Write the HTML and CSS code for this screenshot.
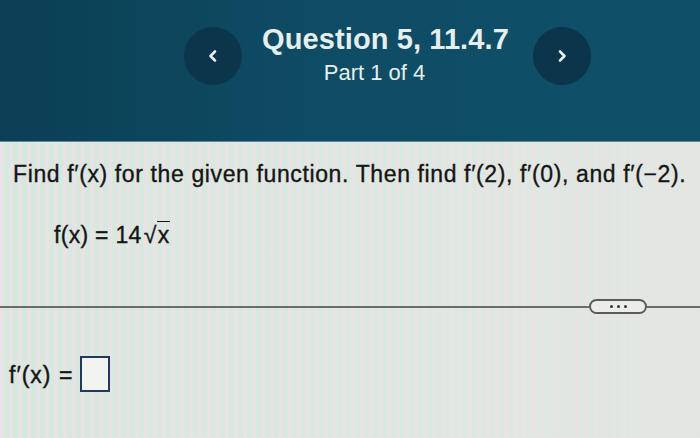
FILE: index.html
```html
<!DOCTYPE html>
<html>
<head>
<meta charset="utf-8">
<link rel="stylesheet" href="styles.css">
</head>
<body>
<header class="hdr">
  <button class="nav"><svg width="14" height="16" viewBox="0 0 14 16"><path d="M9 3.5 L4.5 8 L9 12.5" fill="none" stroke="#e8eef0" stroke-width="2.6" stroke-linecap="round" stroke-linejoin="round"/></svg></button>
  <div class="titles">
    <div class="title">Question 5, 11.4.7</div>
    <div class="part">Part 1 of 4</div>
  </div>
  <button class="nav"><svg width="14" height="16" viewBox="0 0 14 16"><path d="M5 3.5 L9.5 8 L5 12.5" fill="none" stroke="#e8eef0" stroke-width="2.6" stroke-linecap="round" stroke-linejoin="round"/></svg></button>
</header>
<main class="content">
  <p class="question">Find f′(x) for the given function. Then find f′(2), f′(0), and f′(−2).</p>
  <p class="func">f(x) = 14<span class="root">√</span><span class="radicand">x</span></p>
  <div class="divider">
    <div class="line"></div>
    <div class="pill"><span></span><span></span><span></span></div>
    <div class="line short"></div>
  </div>
  <div class="answer">
    <span class="lbl">f′(x) =</span>
    <span class="box"></span>
  </div>
</main>
</body>
</html>
```
FILE: styles.css
```css
html, body {
  margin: 0;
  padding: 0;
  width: 700px;
  height: 438px;
  overflow: hidden;
  font-family: "Liberation Sans", Arial, sans-serif;
}
body {
  background:
    linear-gradient(90deg, rgba(228,231,228,0) 0%, rgba(228,231,228,0.35) 55%, rgba(228,230,227,0.85) 100%),
    repeating-linear-gradient(90deg, #e9e2e6 0px, #e9e2e6 4px, #d6e9dd 4px, #d6e9dd 9px);
}
.hdr {
  height: 142px;
  box-sizing: border-box;
  display: flex;
  align-items: flex-start;
  justify-content: center;
  padding: 22px 0 0 75px;
  background: linear-gradient(90deg, #0b3f55 0%, #0e4c64 45%, #0f5068 100%);
  border-bottom: 1px solid #5a8a98;
}
.nav {
  width: 58px;
  height: 58px;
  margin-top: 5px;
  border: none;
  border-radius: 50%;
  background: #0a354a;
  display: flex;
  align-items: center;
  justify-content: center;
  padding: 0;
}
.titles {
  margin: 0 24px 0 20px;
  text-align: center;
  color: #e6eeee;
}
.title {
  font-size: 29px;
  line-height: 34px;
  font-weight: bold;
  letter-spacing: 0.1px;
}
.part {
  margin-top: 5px;
  padding-right: 22px;
  font-size: 22px;
  line-height: 24px;
  letter-spacing: 0;
}
.content {
  padding-top: 20px;
  color: #151515;
}
.question {
  margin: 0;
  padding-left: 13px;
  font-size: 23px;
  line-height: 24px;
  letter-spacing: 0.62px;
  white-space: nowrap;
  -webkit-text-stroke: 0.35px #151515;
}
.func {
  margin: 37px 0 0 0;
  padding-left: 54px;
  font-size: 23px;
  line-height: 24px;
  letter-spacing: 0.3px;
  -webkit-text-stroke: 0.35px #151515;
}
.root {
  margin-left: 2px;
}
.radicand {
  border-top: 1.5px solid #151515;
  padding: 0 1px;
}
.divider {
  margin-top: 52px;
  height: 15px;
  display: flex;
  align-items: center;
}
.line {
  flex: 1;
  height: 2px;
  background: #6a6c6c;
}
.line.short {
  flex: 0 0 53px;
}
.pill {
  width: 58px;
  height: 15px;
  box-sizing: border-box;
  border: 2px solid #5a5c5c;
  border-radius: 8px;
  background: #ecedeb;
  display: flex;
  align-items: center;
  justify-content: center;
  gap: 4px;
}
.pill span {
  width: 3px;
  height: 3px;
  border-radius: 50%;
  background: #333;
}
.answer {
  margin-top: 42px;
  padding-left: 9px;
  display: flex;
  align-items: flex-end;
  gap: 7px;
}
.lbl {
  font-size: 23px;
  line-height: 24px;
  letter-spacing: 1px;
  color: #151515;
  margin-bottom: 5px;
  -webkit-text-stroke: 0.4px #151515;
}
.box {
  width: 30px;
  height: 36px;
  box-sizing: border-box;
  border: 2px solid #23385e;
  background: #f2f4f2;
}
```
